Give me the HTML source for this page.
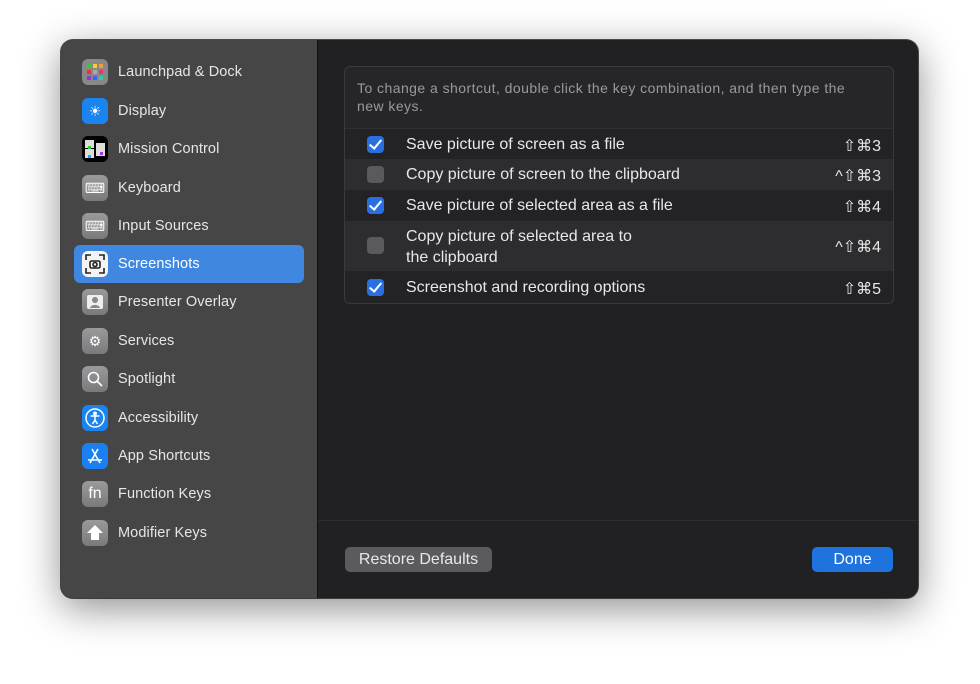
<!DOCTYPE html>
<html><head><style>
body{margin:0;width:980px;height:684px;background:#fff;font-family:"Liberation Sans",sans-serif;position:relative;overflow:hidden}
.win{position:absolute;left:61px;top:40px;width:857px;height:558px;border-radius:12px;overflow:hidden;background:#212123;box-shadow:0 10px 40px rgba(0,0,0,.45),0 0 0 1px #555}
.side{position:absolute;left:0;top:0;width:256px;height:558px;background:#464646;border-right:1px solid #111}
.item{position:absolute;left:13px;width:230px;height:38px;border-radius:6px}
.item.sel{background:#3f87e0}
.ic{position:absolute;left:8px;top:6px;width:26px;height:26px;border-radius:6px;background:linear-gradient(#9a9a9c,#7a7a7c);color:#fff;font-size:14px;text-align:center;line-height:26px}
.lbl{position:absolute;left:44px;top:11px;color:#e6e6e6;font-size:14.5px;letter-spacing:.1px}
.box{position:absolute;left:283px;top:26px;width:548px;height:236px;border:1px solid #3a3a3c;border-radius:6px;background:#262628;overflow:hidden}
.hdr{position:absolute;left:12px;top:12px;color:#9a9a9c;font-size:14px;letter-spacing:.45px;line-height:18px;width:530px;white-space:nowrap}
.row{position:absolute;left:0;width:548px;color:#e8e8e8;font-size:16px}
.cb{position:absolute;left:22px;width:17px;height:17px;border-radius:4px;background:#5a5a5c}
.cb.on{background:#2a6fe0}
.cb.on::after{content:"";position:absolute;left:5px;top:1px;width:5px;height:10px;border:solid #fff;border-width:0 2.2px 2.2px 0;transform:rotate(40deg)}
.t{position:absolute;left:61px}
.k{position:absolute;right:12px}
.btn{position:absolute;top:507px;height:25px;border-radius:5px;color:#e8e8e8;font-size:16px;text-align:center;line-height:25px}
</style></head><body>
<div class="win">
<div class="side">
<div class="item" style="top:13px"><div class="ic" style="background:#888"><svg width="26" height="26"><g><rect x="5" y="5" width="4" height="4" fill="#3c3"/><rect x="11" y="5" width="4" height="4" fill="#fc3"/><rect x="17" y="5" width="4" height="4" fill="#f93"/><rect x="5" y="11" width="4" height="4" fill="#e33"/><rect x="11" y="11" width="4" height="4" fill="#aaa"/><rect x="17" y="11" width="4" height="4" fill="#e36"/><rect x="5" y="17" width="4" height="4" fill="#93c"/><rect x="11" y="17" width="4" height="4" fill="#36f"/><rect x="17" y="17" width="4" height="4" fill="#3c9"/></g></svg></div><div class="lbl">Launchpad &amp; Dock</div></div>
<div class="item" style="top:52px"><div class="ic" style="background:#1a84f0">☀</div><div class="lbl">Display</div></div>
<div class="item" style="top:90px"><div class="ic" style="background:#000"><svg width="26" height="26"><rect x="3" y="4" width="9" height="8" fill="#ddd"/><rect x="3" y="13" width="9" height="9" fill="#ddd"/><rect x="14" y="7" width="9" height="13" fill="#ddd"/><rect x="6" y="10" width="3" height="3" fill="#3c3"/><rect x="6" y="19" width="3" height="3" fill="#39f"/><rect x="18" y="16" width="3" height="3" fill="#a3e"/></svg></div><div class="lbl">Mission Control</div></div>
<div class="item" style="top:129px"><div class="ic">⌨</div><div class="lbl">Keyboard</div></div>
<div class="item" style="top:167px"><div class="ic">⌨</div><div class="lbl">Input Sources</div></div>
<div class="item sel" style="top:205px"><div class="ic" style="background:#f4f4f4;color:#222"><svg width="26" height="26" fill="none" stroke="#222" stroke-width="1.6"><path d="M4 9V4h5M17 4h5v5M22 17v5h-5M9 22H4v-5"/><rect x="8" y="10" width="10" height="7" rx="1.5"/><circle cx="13" cy="13.5" r="2"/></svg></div><div class="lbl" style="color:#fff">Screenshots</div></div>
<div class="item" style="top:243px"><div class="ic"><svg width="26" height="26"><rect x="5" y="6" width="16" height="14" rx="2" fill="#eee"/><circle cx="13" cy="11" r="3" fill="#888"/><path d="M8 19c1-4 9-4 10 0z" fill="#888"/></svg></div><div class="lbl">Presenter Overlay</div></div>
<div class="item" style="top:282px"><div class="ic">⚙</div><div class="lbl">Services</div></div>
<div class="item" style="top:320px"><div class="ic"><svg width="26" height="26" fill="none" stroke="#fff" stroke-width="1.6"><circle cx="11.5" cy="11.5" r="5"/><path d="M15 15l5 5"/></svg></div><div class="lbl">Spotlight</div></div>
<div class="item" style="top:359px"><div class="ic" style="background:#1a84f0"><svg width="26" height="26" fill="none" stroke="#fff" stroke-width="1.5"><circle cx="13" cy="13" r="9"/><circle cx="13" cy="8.5" r="1.2" fill="#fff"/><path d="M8.5 11h9M13 11v4l-2.5 4M13 15l2.5 4"/></svg></div><div class="lbl">Accessibility</div></div>
<div class="item" style="top:397px"><div class="ic" style="background:#1a7ff0"><svg width="26" height="26" fill="none" stroke="#fff" stroke-width="1.6"><path d="M10 6l8 14M16 6l-8 14M6 17h14"/></svg></div><div class="lbl">App Shortcuts</div></div>
<div class="item" style="top:435px"><div class="ic" style="font-size:16px">fn</div><div class="lbl">Function Keys</div></div>
<div class="item" style="top:474px"><div class="ic"><svg width="26" height="26"><path d="M13 5l8 8h-4v7H9v-7H5z" fill="#fff"/></svg></div><div class="lbl">Modifier Keys</div></div>
</div>
<div class="box">
<div class="hdr">To change a shortcut, double click the key combination, and then type the<br>new keys.</div>
<div class="row" style="top:61px;height:31px;background:#232325;border-top:1px solid #2f2f31"><div class="cb on" style="top:7px"></div><div class="t" style="top:7px">Save picture of screen as a file</div><div class="k" style="top:7px">⇧⌘3</div></div>
<div class="row" style="top:92px;height:31px;background:#2d2d2f"><div class="cb" style="top:7px"></div><div class="t" style="top:7px">Copy picture of screen to the clipboard</div><div class="k" style="top:7px">^⇧⌘3</div></div>
<div class="row" style="top:123px;height:31px;background:#232325"><div class="cb on" style="top:7px"></div><div class="t" style="top:7px">Save picture of selected area as a file</div><div class="k" style="top:7px">⇧⌘4</div></div>
<div class="row" style="top:154px;height:50px;background:#2d2d2f"><div class="cb" style="top:16px"></div><div class="t" style="top:5px;line-height:21px">Copy picture of selected area to<br>the clipboard</div><div class="k" style="top:16px">^⇧⌘4</div></div>
<div class="row" style="top:204px;height:32px;background:#232325"><div class="cb on" style="top:8px"></div><div class="t" style="top:8px">Screenshot and recording options</div><div class="k" style="top:8px">⇧⌘5</div></div>
</div>
<div style="position:absolute;left:257px;top:480px;width:600px;height:1px;background:#2e2e30"></div>
<div class="btn" style="left:284px;width:147px;background:#5b5b5d">Restore Defaults</div>
<div class="btn" style="left:751px;width:81px;background:#1f73dd;color:#fff">Done</div>
</div>
</body></html>
